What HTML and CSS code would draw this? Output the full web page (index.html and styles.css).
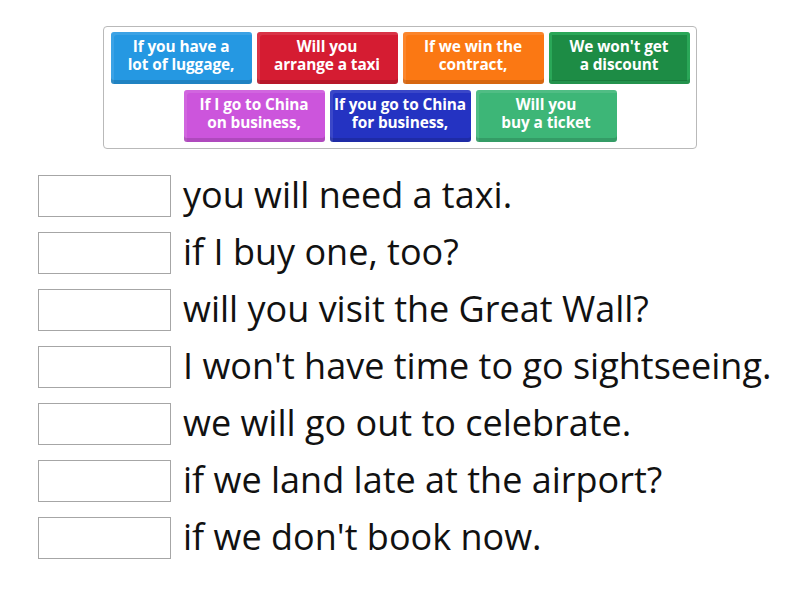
FILE: index.html
```html
<!DOCTYPE html>
<html lang="en">
<head>
<meta charset="utf-8">
<title>Match up</title>
<link rel="stylesheet" href="styles.css">
</head>
<body>
<div class="bank">
  <div class="tile blue">If you have a<br>lot of luggage,</div>
  <div class="tile red">Will you<br>arrange a taxi</div>
  <div class="tile orange">If we win the<br>contract,</div>
  <div class="tile green">We won't get<br>a discount</div>
  <div class="tile purple">If I go to China<br>on business,</div>
  <div class="tile navy">If you go to China<br>for business,</div>
  <div class="tile mint">Will you<br>buy a ticket</div>
</div>
<ul class="rows">
  <li class="row"><span class="slot"></span><span class="text">you will need a taxi.</span></li>
  <li class="row"><span class="slot"></span><span class="text">if I buy one, too?</span></li>
  <li class="row"><span class="slot"></span><span class="text">will you visit the Great Wall?</span></li>
  <li class="row"><span class="slot"></span><span class="text">I won't have time to go sightseeing.</span></li>
  <li class="row"><span class="slot"></span><span class="text">we will go out to celebrate.</span></li>
  <li class="row"><span class="slot"></span><span class="text">if we land late at the airport?</span></li>
  <li class="row"><span class="slot"></span><span class="text">if we don't book now.</span></li>
</ul>
</body>
</html>
```
FILE: styles.css
```css
html, body {
  margin: 0;
  padding: 0;
  background: #fff;
  font-family: "Open Sans", "DejaVu Sans", sans-serif;
}

.bank {
  box-sizing: border-box;
  width: 594px;
  margin: 26px auto 0;
  padding: 5px 6px 6px;
  border: 1px solid #b9b9b9;
  border-radius: 4px;
  display: flex;
  flex-wrap: wrap;
  justify-content: center;
  column-gap: 5px;
  row-gap: 6px;
}

.tile {
  box-sizing: border-box;
  width: 141px;
  height: 52px;
  border-radius: 3px;
  color: #fff;
  font-weight: 700;
  font-size: 15.4px;
  line-height: 18px;
  letter-spacing: -0.1px;
  text-align: center;
  display: flex;
  align-items: center;
  justify-content: center;
  padding-bottom: 4px;
  white-space: nowrap;
  box-shadow:
    inset 0 -4px 0 rgba(0, 0, 0, 0.14),
    inset 3px 3px 0 rgba(255, 255, 255, 0.1);
}

.blue   { background: #2598e2; }
.red    { background: #d51c32; }
.orange { background: #fb7813; }
.green  { background: #1d8c45; box-shadow: inset 0 -4px 0 rgba(0,0,0,0.12), inset 0 0 0 3px rgba(60, 200, 110, 0.45); }
.purple { background: #cc55dc; }
.navy   { background: #2433c2; }
.mint   { background: #3db677; }

.rows {
  list-style: none;
  margin: 26px 0 0;
  padding: 0 0 0 38px;
  display: flex;
  flex-direction: column;
  gap: 15px;
}

.row {
  display: flex;
  align-items: center;
  gap: 12px;
  height: 42px;
}

.slot {
  box-sizing: border-box;
  flex: none;
  width: 133px;
  height: 42px;
  border: 1px solid #a6a6a6;
  background: #fff;
}

.text {
  font-size: 36px;
  line-height: 42px;
  color: #111;
  white-space: nowrap;
  position: relative;
  top: -1px;
}
```
